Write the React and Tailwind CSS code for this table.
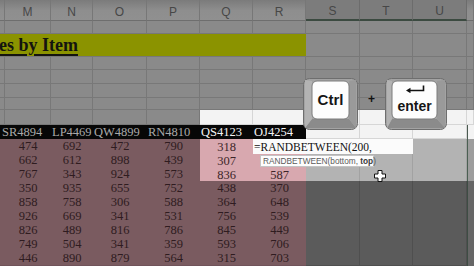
import React from "react";

const GRID = "grid grid-cols-[5px_46px_42px_54px_53px_53px_53px_54px_53px_54px_7px]";
const LETTERS = ["", "M", "N", "O", "P", "Q", "R", "S", "T", "U", ""];
const HEADS = ["SR4894", "LP4469", "QW4899", "RN4810", "QS4123", "OJ4254"];

const rows = [
  [474, 692, 472, 790, 318, null],
  [662, 612, 898, 439, 307, null],
  [767, 343, 924, 573, 836, 587],
  [350, 935, 655, 752, 438, 370],
  [858, 758, 306, 588, 364, 648],
  [926, 669, 341, 531, 756, 539],
  [826, 489, 816, 786, 845, 449],
  [749, 504, 341, 359, 593, 706],
  [446, 890, 879, 564, 315, 703],
];

const GrayRow = ({ h }) => (
  <div className={`${GRID} ${h}`}>
    {LETTERS.map((_, i) => (
      <div key={i} className="bg-[#8a8a8a] border-r border-b border-[#787878]" />
    ))}
  </div>
);

const Key = ({ left, w, fx, fw, children }) => (
  <div className="absolute top-[78px] h-[52px]" style={{ left, width: w }}>
    <svg width={w} height="52" className="absolute inset-0">
      <rect x="0.5" y="0.5" width={w - 1} height="51" rx="6" fill="#a3a3a3" stroke="#6e6e6e" />
      <polygon points={`${fx},41 ${fx + fw},41 ${w - 2},50 2,50`} fill="#8b8b8b" />
      <polygon points={`2,2 ${fx},3 ${fx},41 2,50`} fill="#b3b3b3" />
      <polygon points={`${w - 2},2 ${fx + fw},3 ${fx + fw},41 ${w - 2},50`} fill="#9a9a9a" />
      <rect x={fx} y="3" width={fw} height="38" rx="5" fill="#fdfdfd" stroke="#7c7c7c" />
    </svg>
    <div
      className="absolute top-[3px] h-[38px] flex flex-col items-center justify-center font-['Liberation_Sans',Arial,sans-serif] font-bold text-[#151515]"
      style={{ left: fx, width: fw }}
    >
      {children}
    </div>
  </div>
);

export default function App() {
  return (
    <div className="relative w-[474px] h-[266px] overflow-hidden bg-[#8a8a8a] font-['Liberation_Serif','Times_New_Roman',serif]">
      {/* column letters */}
      <div className={`${GRID} h-[21px] bg-gradient-to-b from-[#7b7b7b] via-[#8e8e8e] to-[#909090]`}>
        {LETTERS.map((l, i) => (
          <div
            key={i}
            className={
              i >= 7 && i <= 9
                ? "flex items-end justify-center pb-[1px] bg-[#7c7c7c] border-r border-[#6c6c6c] border-b-2 border-b-[#3b4a40]"
                : "flex items-end justify-center pb-[1px] border-r border-[#777] border-b border-b-[#6e6e6e]"
            }
          >
            <span className="font-['Liberation_Sans',Arial,sans-serif] text-[12px] leading-[14px] text-[#474747]">{l}</span>
          </div>
        ))}
      </div>

      <GrayRow h="h-[13px]" />

      {/* title row */}
      <div className={`${GRID} h-[23px]`}>
        <div className="col-span-7 bg-[#8b9300] border-b border-[#787878] flex items-center">
          <span className="-ml-[1px] text-[18px] leading-[20px] font-bold underline decoration-[2px] underline-offset-[3px] text-[#141410]">
            es by Item
          </span>
        </div>
        {[0, 1, 2, 3].map((i) => (
          <div key={i} className="bg-[#8a8a8a] border-r border-b border-[#787878]" />
        ))}
      </div>

      <GrayRow h="h-[13px]" />
      <GrayRow h="h-[14px]" />
      <GrayRow h="h-[14px]" />
      <GrayRow h="h-[12px]" />

      {/* white row above headers */}
      <div className={`${GRID} h-[15px]`}>
        {LETTERS.map((_, i) => (
          <div
            key={i}
            className={
              i < 5
                ? "bg-[#8a8a8a] border-r border-b border-[#787878]"
                : "bg-[#f3f3f3] border-r border-b border-[#d6d6d6]"
            }
          />
        ))}
      </div>

      {/* black header row */}
      <div className={`${GRID} h-[14px]`}>
        <div className="bg-[#070707]" />
        {HEADS.map((t, i) => (
          <div key={t} className="bg-[#070707] flex items-center whitespace-nowrap">
            <span
              className={
                (i === 0 ? "-ml-[3px] " : "pl-[1px] ") +
                "text-[12.5px] leading-[14px] " +
                (i >= 4 ? "text-[#f4f4f4]" : "text-[#a9a9a9]")
              }
            >
              {t}
            </span>
          </div>
        ))}
        {[0, 1, 2].map((i) => (
          <div key={i} className="bg-[#f3f3f3] border-r border-b border-[#d6d6d6]" />
        ))}
        <div className="bg-[#f3f3f3] border-l border-[#4a5a50]" />
      </div>

      {/* data rows */}
      {rows.map((r, ri) => {
        const lit = ri < 3;
        return (
          <div key={ri} className={`${GRID} h-[14px]`}>
            <div className="bg-[#7a5b60] border-b border-[#6f5257]" />
            {r.map((v, ci) => {
              const pink = lit && ci >= 4;
              return (
                <div
                  key={ci}
                  className={
                    pink
                      ? "bg-[#d8a8af] flex items-center justify-center"
                      : "bg-[#7a5b60] border-b border-[#70535a] flex items-center justify-center"
                  }
                >
                  {v !== null && (
                    <span
                      className={
                        "text-[12.5px] leading-[14px] " + (pink ? "text-[#3d2529]" : "text-[#2f1c20]")
                      }
                    >
                      {v}
                    </span>
                  )}
                </div>
              );
            })}
            {[0, 1, 2].map((i) => (
              <div
                key={i}
                className={
                  lit
                    ? "bg-[#b3b3b3] border-r border-b border-[#a2a2a2]"
                    : "bg-[#5b5b5b] border-r border-b border-[#4f4f4f]"
                }
              />
            ))}
            <div
              className={
                lit
                  ? "bg-[#9d9d9d] border-l border-[#4a5f52]"
                  : "bg-[#666] border-l border-[#3e4d44]"
              }
            />
          </div>
        );
      })}

      {/* formula being typed */}
      <div className="absolute left-[253px] top-[139px] w-[160px] h-[15px] bg-[#fbfbfb] flex items-center">
        <span className="pl-[1px] text-[11.5px] leading-[14px] text-[#111]">=RANDBETWEEN(200,</span>
      </div>

      {/* function tooltip */}
      <div className="absolute left-[260px] top-[155px] w-[114px] h-[12px] bg-[#fdfdfd] border border-[#c4c4c4] flex items-center px-[2px]">
        <span className="font-['Liberation_Sans',Arial,sans-serif] text-[8.3px] leading-[10px] text-[#5a5a5a] whitespace-nowrap">
          RANDBETWEEN(bottom, <b className="text-[#3a3a3a]">top</b>)
        </span>
      </div>

      {/* keyboard keys */}
      <Key left={303} w={55} fx={9} fw={37}>
        <span className="text-[15px] leading-[16px]">Ctrl</span>
      </Key>
      <span className="absolute left-[368px] top-[92px] font-['Liberation_Sans',Arial,sans-serif] font-bold text-[12px] leading-[14px] text-[#111]">
        +
      </span>
      <Key left={385} w={62} fx={7} fw={45}>
        <svg width="20" height="8" viewBox="0 0 20 8" className="mb-[6px] mt-[-2px]">
          <path d="M18.5 0.5V5.5H3" stroke="#111" strokeWidth="1.6" fill="none" />
          <path d="M1 5.5L5.5 2.8V8.2Z" fill="#111" />
        </svg>
        <span className="text-[14px] leading-[14px]">enter</span>
      </Key>

      {/* cell cursor */}
      <svg width="12" height="12" viewBox="0 0 12 12" className="absolute left-[374px] top-[170px]">
        <path d="M4 0.5H8V4H11.5V8H8V11.5H4V8H0.5V4H4Z" fill="#fff" stroke="#111" strokeWidth="1" />
      </svg>
    </div>
  );
}
